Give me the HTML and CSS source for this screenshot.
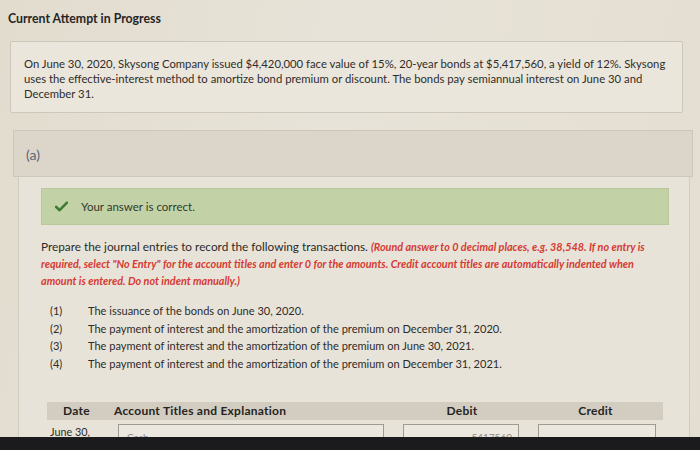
FILE: index.html
```html
<!DOCTYPE html>
<html>
<head>
<meta charset="utf-8">
<link rel="stylesheet" href="styles.css">
</head>
<body>
<div class="screen">
  <h1 class="title">Current Attempt in Progress</h1>
  <div class="intro">
    On June 30, 2020, Skysong Company issued $4,420,000 face value of 15%, 20-year bonds at $5,417,560, a yield of 12%. Skysong uses the effective-interest method to amortize bond premium or discount. The bonds pay semiannual interest on June 30 and December 31.
  </div>
  <div class="part">
    <div class="part-head">(a)</div>
    <div class="part-body">
      <div class="ok">
        <svg class="check" width="13" height="11" viewBox="0 0 13 11"><path d="M1 5.8 L4.6 9.2 L12 1.6" fill="none" stroke="#3f7a37" stroke-width="2.6" stroke-linecap="round" stroke-linejoin="round"/></svg>
        <span>Your answer is correct.</span>
      </div>
      <p class="instr">Prepare the journal entries to record the following transactions. <em class="red">(Round answer to 0 decimal places, e.g. 38,548. If no entry is required, select "No Entry" for the account titles and enter 0 for the amounts. Credit account titles are automatically indented when amount is entered. Do not indent manually.)</em></p>
      <ul class="items">
        <li><span class="num">(1)</span><span>The issuance of the bonds on June 30, 2020.</span></li>
        <li><span class="num">(2)</span><span>The payment of interest and the amortization of the premium on December 31, 2020.</span></li>
        <li><span class="num">(3)</span><span>The payment of interest and the amortization of the premium on June 30, 2021.</span></li>
        <li><span class="num">(4)</span><span>The payment of interest and the amortization of the premium on December 31, 2021.</span></li>
      </ul>
      <div class="table">
        <div class="thead">
          <div class="c-date">Date</div>
          <div class="c-acct">Account Titles and Explanation</div>
          <div class="c-debit">Debit</div>
          <div class="c-credit">Credit</div>
        </div>
        <div class="trow">
          <div class="c-date d">June 30,</div>
          <div class="c-acct"><div class="inp">Cash</div></div>
          <div class="c-debit"><div class="inp num-in">5417560</div></div>
          <div class="c-credit"><div class="inp"></div></div>
        </div>
      </div>
    </div>
  </div>
</div>
<div class="bezel"></div>
</body>
</html>
```

FILE: styles.css
```css
html, body {
  margin: 0;
  padding: 0;
}
body {
  width: 700px;
  height: 450px;
  overflow: hidden;
  background: #e4ded2;
  font-family: Lato, "Open Sans", sans-serif;
  color: #2b2a28;
}
.screen {
  height: 437px;
  overflow: hidden;
  background: linear-gradient(100deg, #e2dccf 0%, #e8e3d8 45%, #e4ded2 100%);
}
.title {
  margin: 0;
  padding: 12px 0 0 8px;
  font-size: 12.3px;
  font-weight: 700;
  line-height: 14px;
  color: #262524;
}
.intro {
  margin: 15px 17px 0 10px;
  padding: 14px 2px 11px 13px;
  border: 1px solid #cdc6b9;
  border-radius: 2px;
  background: #ebe6dc;
  font-size: 11.3px;
  line-height: 15px;
  color: #2f2d2a;
}
.part {
  margin: 17px 7px 0 13px;
}
.part-head {
  height: 47px;
  box-sizing: border-box;
  padding: 16px 0 0 12px;
  background: #dcd6ca;
  border: 1px solid #cdc6b9;
  font-size: 14px;
  line-height: 16px;
  color: #596577;
}
.part-body {
  margin: 0 3px 0 5px;
  padding: 11px 0 0 22px;
  border-left: 1px solid #d2ccbf;
  border-right: 1px solid #d2ccbf;
  background: #e8e3d8;
  height: 270px;
}
.ok {
  width: 628px;
  height: 37px;
  box-sizing: border-box;
  display: flex;
  align-items: center;
  gap: 13px;
  padding-left: 13px;
  background: #c3d2a6;
  border: 1px solid #b8c89b;
  font-size: 11.5px;
  color: #2f3a2a;
}
.check {
  display: block;
}
.instr {
  margin: 13px 0 0 0;
  width: 612px;
  font-size: 11.8px;
  line-height: 17px;
  color: #2b2a28;
}
.red {
  color: #d53a33;
  font-weight: 700;
  font-style: italic;
  font-size: 10.8px;
}
.items {
  list-style: none;
  margin: 13px 0 0 9px;
  padding: 0;
  font-size: 11.05px;
  line-height: 17.7px;
  color: #2e2c29;
}
.items li {
  display: flex;
}
.num {
  width: 38px;
  flex: none;
}
.table {
  margin: 29px 0 0 6px;
  width: 616px;
}
.thead {
  display: flex;
  height: 18px;
  align-items: center;
  background: #d3cdc1;
  font-size: 12px;
  font-weight: 700;
  letter-spacing: 0.25px;
  color: #252422;
}
.c-date {
  width: 67px;
  flex: none;
  box-sizing: border-box;
  padding-left: 16px;
}
.c-acct {
  width: 282px;
  flex: none;
}
.c-debit {
  width: 132px;
  flex: none;
  text-align: center;
}
.c-credit {
  width: 135px;
  flex: none;
  text-align: center;
}
.trow {
  display: flex;
  align-items: flex-start;
  padding-top: 4px;
  font-size: 10.8px;
}
.trow .d {
  padding-left: 3px;
  padding-top: 1px;
  color: #2e2c29;
}
.trow .c-acct {
  padding-left: 4px;
  box-sizing: border-box;
}
.inp {
  height: 22px;
  box-sizing: border-box;
  border: 1px solid #9f9a92;
  background: #ece8e0;
  padding: 6px 6px 0 8px;
  color: #8d8a85;
  font-size: 10px;
  text-align: left;
}
.trow .c-acct .inp {
  width: 266px;
}
.trow .c-debit {
  padding-left: 7px;
  box-sizing: border-box;
}
.trow .c-debit .inp {
  width: 116px;
  text-align: right;
}
.trow .c-credit {
  padding-left: 10px;
  box-sizing: border-box;
}
.trow .c-credit .inp {
  width: 118px;
}
.bezel {
  height: 13px;
  background: #1b1b1d;
}
```
